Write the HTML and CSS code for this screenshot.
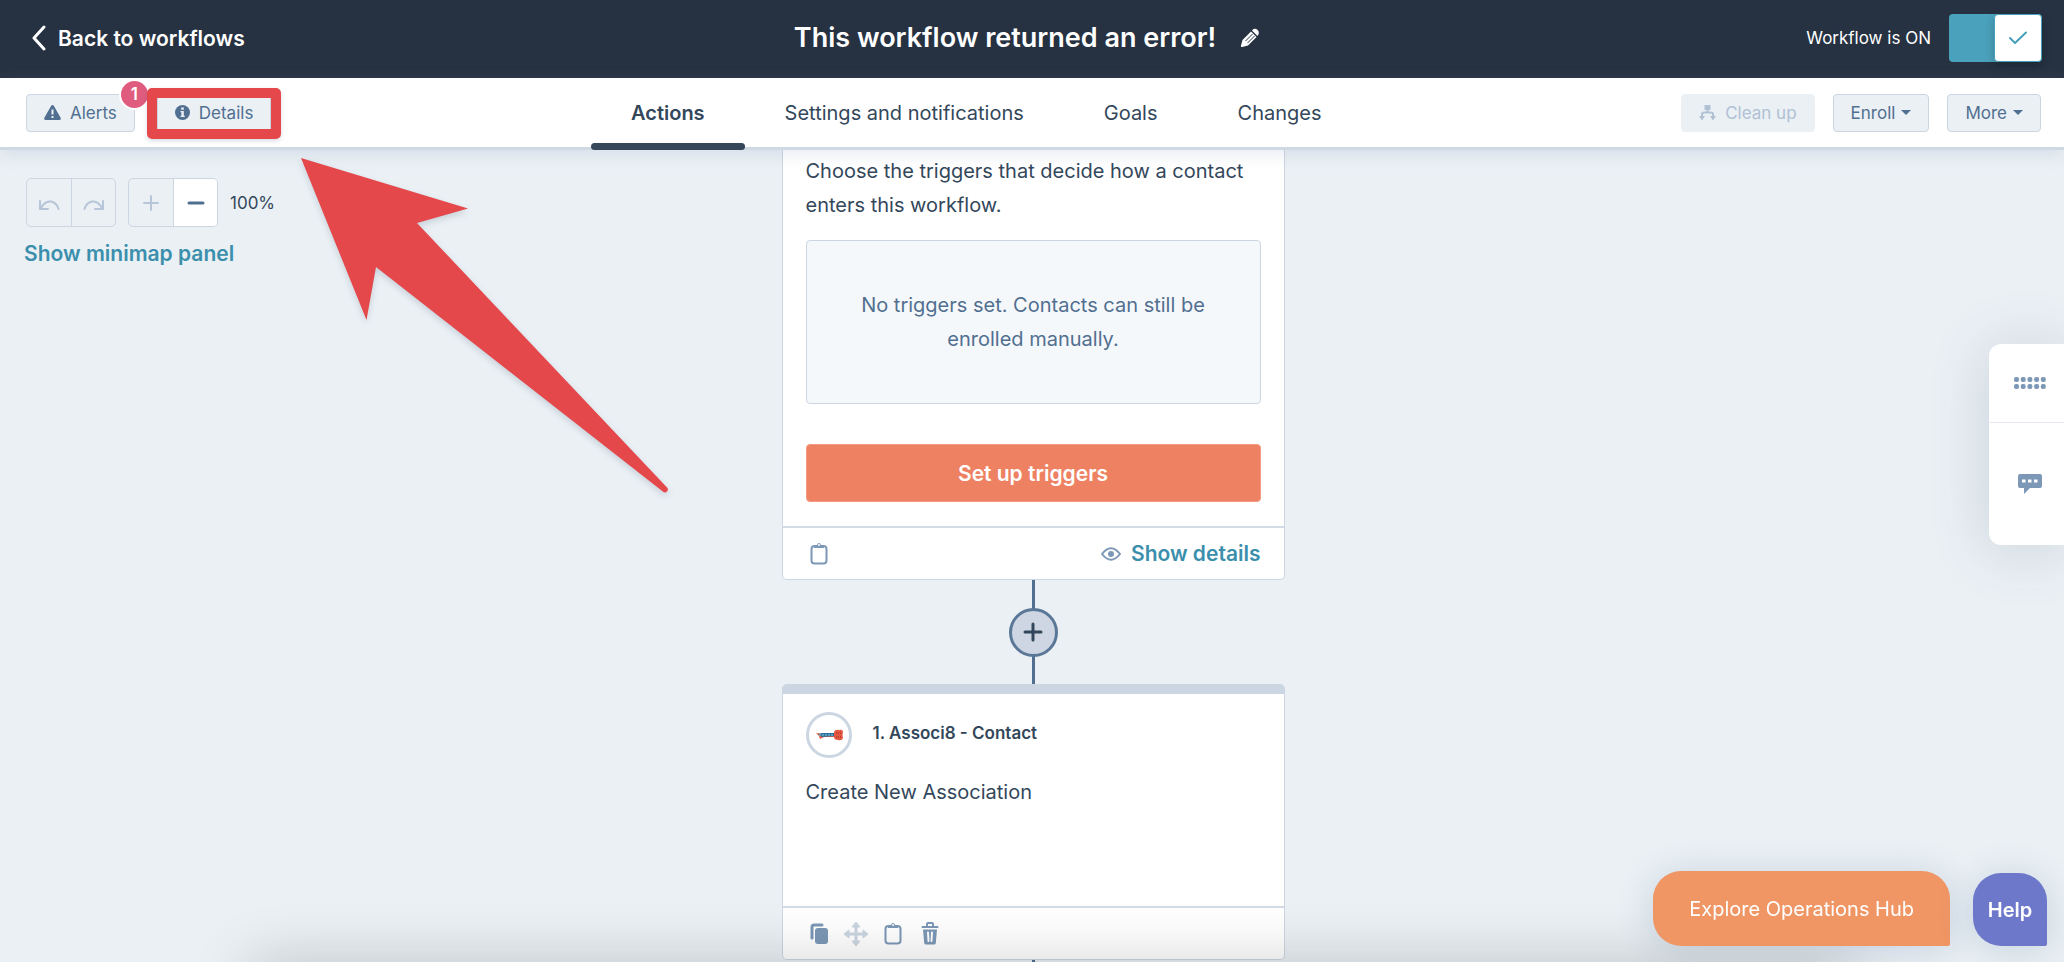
FILE: index.html
```html
<!DOCTYPE html>
<html lang="en">
<head>
    <meta charset="UTF-8">
    <meta name="viewport" content="width=device-width, initial-scale=1.0">
    <title>Workflow editor</title>
    <link rel="stylesheet" href="styles.css">
</head>
<body>
    <!-- Top bar -->
    <header class="topbar">
        <a class="back-link" href="#">
            <svg width="14" height="28" viewBox="0 0 14 28" fill="none" stroke="currentColor" stroke-width="3" stroke-linecap="round" stroke-linejoin="round"><path d="M12 3 2 14l10 11"/></svg>
            Back to workflows
        </a>
        <div class="title-group">
            <h1>This workflow returned an error!</h1>
            <button class="icon-button" aria-label="Edit name">
                <svg width="20" height="20" viewBox="0 0 20 20"><path fill="#fff" d="M1 18.500q-.3-.3 0-1l1.500-5.500L11 3.500l5.500 5.500L8 17.500 2 19q-.7.100-1-.5zM12 2.500l1.500-1.500q2-1 4 .8t1.200 4.200L17.500 8z"/><path d="M5.500 13l7-7M7.500 15l7-7" stroke="#253342" stroke-width="1"/></svg>
            </button>
        </div>
        <div class="status">
            <label for="workflowToggle">Workflow is ON</label>
            <span class="toggle">
                <input type="checkbox" id="workflowToggle" checked>
                <span class="knob">
                    <svg width="20" height="14" viewBox="0 0 20 14" fill="none" stroke="#45a0ba" stroke-width="2" stroke-linecap="round" stroke-linejoin="round"><path d="M2 7l5 5L18 1.500"/></svg>
                </span>
            </span>
        </div>
    </header>

    <!-- Tabs and buttons -->
    <nav class="navbar">
        <div class="nav-left">
            <button class="btn">
                <svg width="17" height="15" viewBox="0 0 17 15"><path fill="#516f90" d="M7.200.8q1.300-1.400 2.600 0l6.800 12q.7 1.900-1.300 2.200H1.700Q-.3 14.700.4 12.800z"/><path stroke="#eaf0f6" stroke-width="2" d="M8.500 4.500v5M8.500 11v2"/></svg>
                Alerts
                <span class="badge">1</span>
            </button>
            <button class="btn btn-details">
                <svg width="15" height="15" viewBox="0 0 15 15"><circle cx="7.500" cy="7.500" r="7.500" fill="#516f90"/><path fill="#eaf0f6" d="M6.200 2.500h2.600v2.200H6.200zM5.500 6h3.300v4.800h1V12H5.500v-1.200h.9V7.200h-.9z"/></svg>
                Details
            </button>
        </div>
        <div class="tabs">
            <a class="tab active" href="#">Actions</a>
            <a class="tab" href="#">Settings and notifications</a>
            <a class="tab" href="#">Goals</a>
            <a class="tab" href="#">Changes</a>
        </div>
        <div class="nav-right">
            <button class="btn btn-disabled" disabled>
                <svg width="17" height="16" viewBox="0 0 17 16"><g fill="none" stroke="#b0c1d4" stroke-width="2"><path d="M8.500 3v4.500M3 12V9.500q0-2 2-2h7q2 0 2 2V12"/></g><path fill="#b0c1d4" d="M5.500 0h6v5h-6zM0 11h6l-3 4.500zM11 11h6l-3 4.500z"/></svg>
                Clean up
            </button>
            <button class="btn btn-menu">Enroll <span class="caret"></span></button>
            <button class="btn btn-menu">More <span class="caret"></span></button>
        </div>
    </nav>

    <!-- Canvas -->
    <main class="canvas">
        <div class="tools">
            <div class="tool-row">
                <div class="tool-group">
                    <button class="tool" aria-label="Undo" disabled>
                        <svg width="22" height="16" viewBox="0 0 22 16" fill="none" stroke="currentColor" stroke-width="2" stroke-linecap="round" stroke-linejoin="round"><path d="M2 6v8h8M3 13Q7 5.500 13 6.500q5.500 1 7.500 7.500"/></svg>
                    </button>
                    <button class="tool" aria-label="Redo" disabled>
                        <svg width="22" height="16" viewBox="0 0 22 16" fill="none" stroke="currentColor" stroke-width="2" stroke-linecap="round" stroke-linejoin="round"><path d="M20 6v8h-8M19 13Q15 5.500 9 6.500q-5.500 1-7.500 7.500"/></svg>
                    </button>
                </div>
                <div class="tool-group">
                    <button class="tool" aria-label="Zoom in" disabled>
                        <svg width="18" height="18" viewBox="0 0 18 18" stroke="currentColor" stroke-width="2" stroke-linecap="round"><path d="M9 2v14M2 9h14"/></svg>
                    </button>
                    <button class="tool tool-on" aria-label="Zoom out">
                        <svg width="18" height="18" viewBox="0 0 18 18" stroke="currentColor" stroke-width="3" stroke-linecap="round"><path d="M2 9h14"/></svg>
                    </button>
                </div>
                <span class="zoom-level">100%</span>
            </div>
            <a class="link" href="#">Show minimap panel</a>
        </div>

        <div class="flow">
            <section class="card card-trigger">
                <div class="card-body">
                    <p>Choose the triggers that decide how a contact enters this workflow.</p>
                    <div class="empty-box">No triggers set. Contacts can still be enrolled manually.</div>
                    <button class="btn-primary">Set up triggers</button>
                </div>
                <div class="card-footer">
                    <button class="icon-button" aria-label="Copy to clipboard">
                        <svg width="20" height="24" viewBox="0 0 20 24"><rect x="2.500" y="4" width="15" height="17.500" rx="3" fill="none" stroke="#7c98b6" stroke-width="2"/><path fill="#7c98b6" d="M5 6V4.500q.2-1.300 2-1.500h1q.5-2 2-2t2 2h1q1.800.2 2 1.500V6z"/><circle cx="10" cy="3" r="1" fill="#fff"/></svg>
                    </button>
                    <a class="link show-details" href="#">
                        <svg width="20" height="14" viewBox="0 0 20 14"><path d="M1 7q9-11.500 18 0Q10 18.500 1 7z" fill="none" stroke="#7c98b6" stroke-width="2"/><circle cx="10" cy="7" r="3" fill="#7c98b6"/></svg>
                        Show details
                    </a>
                </div>
            </section>

            <div class="connector">
                <button class="add-step" aria-label="Add action">
                    <svg width="20" height="20" viewBox="0 0 20 20" stroke="#33475b" stroke-width="3" stroke-linecap="round"><path d="M10 2v16M2 10h16"/></svg>
                </button>
            </div>

            <section class="card card-action">
                <div class="card-body">
                    <div class="action-title">
                        <span class="avatar">
                            <svg width="28" height="12" viewBox="0 0 28 12"><path fill="#e5573f" d="M1 4l7 1 12 0v3L9 8l-4 2-1-3z"/><path fill="#2e6f9b" d="M3 5l4-1 13 0v3L7 8z"/><path stroke="#7fd0dd" stroke-dasharray="2 1" d="M4 6h14"/><path fill="#e5573f" d="M19 3q1-3 5-2 4-1 4 2-1 3 0 6-1 3-5 2-4 0-4-3z"/><path stroke="#8b2c2c" stroke-dasharray="1 1" d="M21 4h5M21 8h5"/></svg>
                        </span>
                        <h2>1. Associ8 - Contact</h2>
                    </div>
                    <p>Create New Association</p>
                </div>
                <div class="card-footer">
                    <button class="icon-button" aria-label="Clone">
                        <svg width="20" height="24" viewBox="0 0 20 24"><path d="M3 16V5q0-2 2-2h8" fill="none" stroke="#7c98b6" stroke-width="3" stroke-linecap="round"/><rect x="6" y="6" width="13" height="16" rx="3" fill="#7c98b6"/></svg>
                    </button>
                    <button class="icon-button" aria-label="Move" disabled>
                        <svg width="26" height="26" viewBox="0 0 26 26"><path d="M13 4v18M4 13h18" stroke="#cbd6e2" stroke-width="3"/><path fill="#cbd6e2" stroke="#cbd6e2" stroke-linejoin="round" d="M13 1l4 5H9zM13 25l4-5H9zM1 13l5-4v8zM25 13l-5-4v8z"/></svg>
                    </button>
                    <button class="icon-button" aria-label="Copy to clipboard">
                        <svg width="20" height="24" viewBox="0 0 20 24"><rect x="2.500" y="4" width="15" height="17.500" rx="3" fill="none" stroke="#7c98b6" stroke-width="2"/><path fill="#7c98b6" d="M5 6V4.500q.2-1.300 2-1.500h1q.5-2 2-2t2 2h1q1.800.2 2 1.500V6z"/><circle cx="10" cy="3" r="1" fill="#fff"/></svg>
                    </button>
                    <button class="icon-button" aria-label="Delete">
                        <svg width="18" height="26" viewBox="0 0 18 26"><path d="M1.500 6h15M6 5.500V3q0-1 1-1h4q1 0 1 1v2.500" fill="none" stroke="#7c98b6" stroke-width="2" stroke-linecap="round"/><path fill="#7c98b6" d="M2 8.500h14L14.800 22q-.2 1.500-1.800 1.500H5Q3.400 23.500 3.200 22z"/><path d="M7 11.500l.5 8.500M11 11.500l-.5 8.500" stroke="#fff" stroke-width="2" stroke-linecap="round"/></svg>
                    </button>
                </div>
            </section>
            <div class="line-end"></div>
        </div>
    </main>

    <!-- Side panel -->
    <aside class="side-panel">
        <button class="side-button side-keys" aria-label="Shortcuts">
            <svg width="32" height="12" viewBox="0 0 32 12" fill="#7c98b6"><rect x="0" y="0" width="5" height="5" rx="2"/><rect x="6.700" y="0" width="5" height="5" rx="2"/><rect x="13.400" y="0" width="5" height="5" rx="2"/><rect x="20.100" y="0" width="5" height="5" rx="2"/><rect x="26.800" y="0" width="5" height="5" rx="2"/><rect x="0" y="7" width="5" height="5" rx="2"/><rect x="6.700" y="7" width="5" height="5" rx="2"/><rect x="13.400" y="7" width="5" height="5" rx="2"/><rect x="20.100" y="7" width="5" height="5" rx="2"/><rect x="26.800" y="7" width="5" height="5" rx="2"/></svg>
        </button>
        <button class="side-button side-chat" aria-label="Comments">
            <svg width="24" height="20" viewBox="0 0 24 20"><path fill="#7c98b6" d="M2 0h20q2 0 2 2v10q0 2-2 2H12l-6 6v-6H2q-2 0-2-2V2q0-2 2-2z"/><path fill="#fff" d="M4 5.500h3.500v3H4zM10 5.500h3.500v3H10zM16 5.500h3.500v3H16z"/></svg>
        </button>
    </aside>

    <div class="bottom-shade"></div>

    <div class="floating">
        <button class="bubble bubble-explore">Explore Operations Hub</button>
        <button class="bubble bubble-help">Help</button>
    </div>

    <!-- Arrow pointing at Details -->
    <svg class="arrow" width="370" height="340" viewBox="0 0 370 340"><path fill="#e4484b" d="M1 1l167 50.500-51 14.500L367.500 331q1 2-.5 3.500-1.500 1.500-3.500.5L76 110l-9.500 53z"/></svg>
</body>
</html>
```
FILE: styles.css
```css
/* Basic Styles */
* {
    box-sizing: border-box;
}

body {
    font-family: Inter, "Liberation Sans", sans-serif;
    font-size: 20px;
    color: #33475b;
    background-color: #eaf0f4;
    display: flex;
    flex-direction: column;
    height: 100vh;
    margin: 0;
    overflow: hidden;
}

button {
    font-family: inherit;
    cursor: pointer;
}

a {
    color: inherit;
    text-decoration: none;
}

h1, h2, p {
    margin: 0;
}

svg {
    display: block;
    flex: none;
}

.icon-button {
    background: none;
    border: none;
    padding: 0;
}

.link {
    font-size: 21px;
    color: #3b8fac;
    font-weight: 600;
}

/* Top bar */
.topbar {
    display: grid;
    grid-template-columns: 1fr auto 1fr;
    align-items: center;
    flex: none;
    height: 78px;
    padding: 0 22px 2px 32px;
    background-color: #263241;
    color: #fff;
}

.back-link {
    display: flex;
    align-items: center;
    gap: 12px;
    font-size: 21px;
    font-weight: 600;
}

.title-group {
    display: flex;
    align-items: center;
    gap: 24px;
    padding-right: 20px;
}

.title-group h1 {
    font-size: 27px;
    line-height: 32px;
    font-weight: 600;
}

.status {
    display: flex;
    align-items: center;
    justify-content: flex-end;
    gap: 18px;
    font-size: 17px;
}

.toggle {
    position: relative;
    width: 93px;
    height: 48px;
}

.toggle input {
    appearance: none;
    width: 93px;
    height: 48px;
    margin: 0;
    background-color: #4aa1bb;
    border-radius: 4px;
}

.knob {
    position: absolute;
    top: 0;
    right: 0;
    display: flex;
    align-items: center;
    justify-content: center;
    width: 48px;
    height: 48px;
    background-color: #fff;
    border: 1px solid #45a0ba;
    border-radius: 4px;
    box-shadow: 0 4px 10px rgba(0, 0, 0, 0.2);
    pointer-events: none;
}

/* Tabs and buttons */
.navbar {
    position: relative;
    z-index: 1;
    display: flex;
    justify-content: space-between;
    align-items: center;
    flex: none;
    height: 72px;
    padding: 0 23px 0 26px;
    background-color: #fff;
    border-bottom: 3px solid #cfd9e4;
    box-shadow: 0 4px 16px rgba(130, 150, 190, 0.2);
}

.nav-left {
    display: flex;
    gap: 22px;
}

.nav-right {
    display: flex;
    gap: 18px;
}

.btn {
    position: relative;
    display: flex;
    align-items: center;
    justify-content: center;
    gap: 9px;
    height: 38px;
    padding: 0 17px;
    font-size: 17px;
    color: #516f90;
    background-color: #eaf0f4;
    border: 1px solid #cbd6e2;
    border-radius: 4px;
}

.btn-menu {
    gap: 6px;
}

/* Red frame around the Details button */
.btn-details::after {
    content: "";
    position: absolute;
    inset: -7px -11px -8px;
    border: 10px solid #e4484b;
    border-radius: 5px;
    box-shadow: 0 2px 4px rgba(60, 80, 110, 0.2);
}

.btn-disabled {
    color: #b0c1d4;
    border-color: #eaf0f4;
}

.badge {
    position: absolute;
    top: -16px;
    right: -16px;
    width: 31px;
    height: 31px;
    font-size: 17px;
    line-height: 27px;
    font-weight: 600;
    color: #fff;
    background-color: #e05c7e;
    border: 2px solid #fff;
    border-radius: 50%;
}

.caret {
    border: 5px solid transparent;
    border-top-color: #516f90;
    border-bottom: none;
}

.tabs {
    display: flex;
    align-self: stretch;
}

.tab {
    position: relative;
    display: flex;
    align-items: center;
    padding: 0 40px;
}

.tab.active {
    font-weight: 600;
}

.tab.active::after {
    content: "";
    position: absolute;
    left: 0;
    right: 0;
    bottom: -3px;
    height: 7px;
    background-color: #37475a;
    border-radius: 4px;
}

/* Canvas */
.canvas {
    display: grid;
    grid-template-columns: 1fr 503px 1fr;
    flex: 1;
    min-height: 0;
    padding: 0 22px 0 24px;
    overflow: hidden;
}

.tools {
    padding-top: 28px;
}

.tool-row {
    display: flex;
    align-items: center;
    gap: 12px;
    margin: 0 0 14px 2px;
}

.tool-group {
    display: flex;
    border: 1px solid #cbd6e2;
    border-radius: 5px;
    overflow: hidden;
}

.tool {
    display: flex;
    align-items: center;
    justify-content: center;
    width: 44px;
    height: 47px;
    padding: 0;
    color: #b6c5d8;
    background: none;
    border: none;
}

.tool + .tool {
    border-left: 1px solid #cbd6e2;
}

.tool-on {
    color: #516f90;
    background-color: #fff;
}

.zoom-level {
    font-size: 17px;
}

/* Cards */
.card {
    background-color: #fff;
    border: 1px solid #cbd6e2;
    border-radius: 5px;
}

.card-trigger {
    border-top: none;
    border-radius: 0 0 5px 5px;
}

.card-body {
    padding: 4px 23px 24px;
    line-height: 34px;
}

.empty-box {
    display: flex;
    align-items: center;
    height: 164px;
    margin: 18px 0 40px;
    padding: 0 48px;
    color: #516f90;
    text-align: center;
    background-color: #f5f8fa;
    border: 1px solid #cbd6e2;
    border-radius: 4px;
}

.btn-primary {
    display: block;
    width: 100%;
    height: 58px;
    font-size: 21px;
    font-weight: 600;
    color: #fff;
    background-color: #ee8162;
    border: 1px solid #f39a80;
    border-radius: 4px;
}

.card-footer {
    display: flex;
    align-items: center;
    gap: 11px;
    height: 53px;
    padding: 0 23px;
    border-top: 2px solid #d3dce6;
}

.card-footer .icon-button {
    display: flex;
    justify-content: center;
    width: 26px;
}

.show-details {
    display: flex;
    align-items: center;
    gap: 10px;
    margin-left: auto;
}

.connector {
    display: flex;
    align-items: center;
    justify-content: center;
    height: 104px;
    background: linear-gradient(#516f90, #516f90) center / 3px 100% no-repeat;
}

.add-step {
    display: flex;
    align-items: center;
    justify-content: center;
    width: 49px;
    height: 49px;
    padding: 0;
    background-color: #cdd6e2;
    border: 3px solid #5b7797;
    border-radius: 50%;
}

.card-action {
    border-top: 10px solid #cbd6e2;
}

.card-action .card-body {
    height: 212px;
    padding-top: 18px;
}

.action-title {
    display: flex;
    align-items: center;
    gap: 21px;
    margin-bottom: 17px;
}

.action-title h2 {
    font-size: 17px;
    line-height: 24px;
    font-weight: 600;
    padding-bottom: 4px;
}

.avatar {
    display: flex;
    align-items: center;
    justify-content: center;
    width: 46px;
    height: 46px;
    border: 3px solid #cbd6e2;
    border-radius: 50%;
}

.line-end {
    width: 3px;
    height: 20px;
    margin: 0 auto;
    background-color: #516f90;
}

/* Side panel */
.side-panel {
    position: fixed;
    top: 344px;
    right: 0;
    width: 75px;
    background-color: #fff;
    border-radius: 12px 0 0 12px;
    box-shadow: 0 4px 60px rgba(70, 90, 120, 0.2);
}

.side-button {
    display: flex;
    align-items: center;
    justify-content: center;
    width: 100%;
    padding: 0 0 0 6px;
    background: none;
    border: none;
}

.side-keys {
    height: 79px;
    border-bottom: 1px solid #e5eaf0;
}

.side-chat {
    height: 122px;
}

/* Floating bubbles */
.bottom-shade {
    position: fixed;
    left: 260px;
    right: 220px;
    bottom: -40px;
    height: 30px;
    box-shadow: 0 0 60px 10px rgba(0, 0, 0, 0.2);
}

.floating {
    position: fixed;
    right: 17px;
    bottom: 16px;
    display: flex;
    align-items: flex-end;
    gap: 23px;
}

.bubble {
    height: 73px;
    padding: 0;
    font-size: 20px;
    color: #fff;
    border: none;
    border-radius: 28px 28px 2px 28px;
    box-shadow: 0 4px 36px rgba(60, 90, 140, 0.2);
}

.bubble-explore {
    height: 75px;
    padding: 0 36px;
    background-color: #f09665;
}

.bubble-help {
    width: 74px;
    font-weight: 600;
    background-color: #6e78ca;
}

/* Arrow */
.arrow {
    position: absolute;
    z-index: 2;
    left: 300px;
    top: 157px;
    filter: drop-shadow(0 3px 3px rgba(60, 80, 110, 0.2));
    pointer-events: none;
}
```
